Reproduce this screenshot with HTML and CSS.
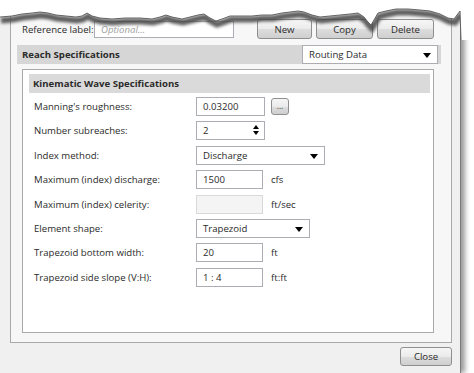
FILE: index.html
```html
<!DOCTYPE html>
<html>
<head>
<meta charset="utf-8">
<link rel="stylesheet" href="styles.css">
</head>
<body>
<div class="window">
  <div class="panel">
    <div class="ref-row">
      <span class="ref-label">Reference label:</span>
      <div class="textbox ref-input placeholder">Optional...</div>
      <div class="btn-group">
        <button class="btn btn-new">New</button>
        <button class="btn btn-copy">Copy</button>
        <button class="btn btn-delete">Delete</button>
      </div>
    </div>
    <div class="section-bar">
      <span class="section-title">Reach Specifications</span>
      <div class="combo routing">Routing Data<span class="arrow"></span></div>
    </div>
    <div class="group">
      <div class="group-title">Kinematic Wave Specifications</div>
      <div class="rows">
        <div class="row">
          <span class="label">Manning's roughness:</span>
          <div class="textbox w69">0.03200</div>
          <button class="btn btn-dots">...</button>
        </div>
        <div class="row">
          <span class="label">Number subreaches:</span>
          <div class="textbox w69 spin">2<span class="spinner"><span class="up"></span><span class="down"></span></span></div>
        </div>
        <div class="row">
          <span class="label">Index method:</span>
          <div class="combo w129">Discharge<span class="arrow"></span></div>
        </div>
        <div class="row">
          <span class="label">Maximum (index) discharge:</span>
          <div class="textbox w67">1500</div>
          <span class="unit">cfs</span>
        </div>
        <div class="row">
          <span class="label">Maximum (index) celerity:</span>
          <div class="textbox w67 disabled"></div>
          <span class="unit">ft/sec</span>
        </div>
        <div class="row">
          <span class="label">Element shape:</span>
          <div class="combo w114">Trapezoid<span class="arrow"></span></div>
        </div>
        <div class="row">
          <span class="label">Trapezoid bottom width:</span>
          <div class="textbox w67">20</div>
          <span class="unit">ft</span>
        </div>
        <div class="row">
          <span class="label">Trapezoid side slope (V:H):</span>
          <div class="textbox w67">1 : 4</div>
          <span class="unit">ft:ft</span>
        </div>
      </div>
    </div>
  </div>
  <div class="footer">
    <button class="btn btn-close">Close</button>
  </div>
</div>
<svg class="torn" width="474" height="40" viewBox="0 0 474 40">
  <defs>
    <filter id="blur" x="-5%" y="-50%" width="110%" height="200%">
      <feGaussianBlur stdDeviation="1.8"/>
    </filter>
  </defs>
  <path d="M0,17 L12,16 L22,14 L32,13 L40,12 L48,13 L56,15 L66,16 L76,17 L82,16 L87,13 L92,16 L100,18 L112,19 L125,18 L140,18 L152,19 L160,17 L166,15 L172,17 L182,19 L190,17 L198,15 L204,14 L210,18 L216,21 L222,19 L230,16 L240,16 L252,16 L262,15 L272,15 L282,13 L290,12 L298,11 L304,12 L312,15 L320,17 L330,16 L340,15 L350,14 L358,13 L364,17 L368,22 L371,25 L374,20 L378,13 L386,11 L396,9 L408,9 L420,10 L430,11 L440,14 L448,18 L454,19 L457,15 L460,11" fill="none" stroke="#444" stroke-width="6" transform="translate(1,3.5)" filter="url(#blur)" opacity="0.85"/>
  <path d="M0,0 L474,0 L474,40 L461,40 L460,11 L457,15 L454,19 L448,18 L440,14 L430,11 L420,10 L408,9 L396,9 L386,11 L378,13 L374,20 L371,25 L368,22 L364,17 L358,13 L350,14 L340,15 L330,16 L320,17 L312,15 L304,12 L298,11 L290,12 L282,13 L272,15 L262,15 L252,16 L240,16 L230,16 L222,19 L216,21 L210,18 L204,14 L198,15 L190,17 L182,19 L172,17 L166,15 L160,17 L152,19 L140,18 L125,18 L112,19 L100,18 L92,16 L87,13 L82,16 L76,17 L66,16 L56,15 L48,13 L40,12 L32,13 L22,14 L12,16 L0,17 Z" fill="#ffffff"/>
  <path d="M0,17 L12,16 L22,14 L32,13 L40,12 L48,13 L56,15 L66,16 L76,17 L82,16 L87,13 L92,16 L100,18 L112,19 L125,18 L140,18 L152,19 L160,17 L166,15 L172,17 L182,19 L190,17 L198,15 L204,14 L210,18 L216,21 L222,19 L230,16 L240,16 L252,16 L262,15 L272,15 L282,13 L290,12 L298,11 L304,12 L312,15 L320,17 L330,16 L340,15 L350,14 L358,13 L364,17 L368,22 L371,25 L374,20 L378,13 L386,11 L396,9 L408,9 L420,10 L430,11 L440,14 L448,18 L454,19 L457,15 L460,11 L461,40" fill="none" stroke="#555" stroke-width="0.9"/>
</svg>
</body>
</html>
```
FILE: styles.css
```css
* { box-sizing: border-box; }
html, body { margin: 0; padding: 0; background: #ffffff; }
body {
  font-family: "Open Sans", "Noto Sans", sans-serif;
  font-size: 9.6px;
  color: #2b2b2b;
  width: 474px;
  height: 373px;
  overflow: hidden;
  position: relative;
}
button { font-family: inherit; font-size: inherit; color: inherit; }

.window {
  width: 461px;
  height: 373px;
  background: #f0f0f0;
  border-right: 1px solid #7a7a7a;
  box-shadow: 4px 0 5px 0 rgba(0,0,0,0.4);
  padding-top: 8px;
}

.panel {
  margin-left: 10px;
  width: 442px;
  height: 335px;
  background: #f7f7f7;
  border: 1px solid #a9a9a9;
  border-top: none;
  padding: 11px 10px 0 6px;
}

.ref-row {
  display: flex;
  align-items: center;
  height: 20px;
  padding-left: 5px;
}
.ref-label { width: 72px; }
.textbox {
  height: 19px;
  background: #fff;
  border: 1px solid #abadb3;
  display: flex;
  align-items: center;
  padding-left: 6px;
  position: relative;
}
.ref-input { width: 140px; height: 17px; }
.placeholder { color: #a0a0a0; font-style: italic; }
.btn-group { display: flex; gap: 4px; margin-left: auto; margin-right: 7px; }
.btn {
  height: 20px;
  border: 1px solid #8e8f8f;
  border-radius: 3px;
  background: linear-gradient(#f6f6f6 0%, #ebebeb 50%, #dddddd 51%, #cfcfcf 100%);
  padding: 0;
  display: flex;
  align-items: center;
  justify-content: center;
}
.btn-new { width: 55px; }
.btn-copy { width: 57px; }
.btn-delete { width: 57px; }

.section-bar {
  margin-top: 6px;
  height: 19px;
  background: #d6d6d6;
  display: flex;
  align-items: center;
  padding-left: 5px;
}
.section-title { font-weight: 700; }
.combo {
  height: 19px;
  background: #fff;
  border: 1px solid #abadb3;
  display: flex;
  align-items: center;
  padding-left: 6px;
  position: relative;
}
.routing { width: 136px; margin-left: auto; margin-right: 3px; }
.arrow {
  position: absolute;
  right: 6px;
  top: 7px;
  width: 0; height: 0;
  border-left: 4px solid transparent;
  border-right: 4px solid transparent;
  border-top: 5px solid #000;
}

.group {
  margin: 5px 7px 0 5px;
  height: 264px;
  background: #fff;
  border: 1px solid #a9a9a9;
  padding: 4px 3px 0 6px;
}
.group-title {
  height: 19px;
  background: #dadada;
  font-weight: 700;
  display: flex;
  align-items: center;
  padding-left: 4px;
}
.rows {
  margin-top: 4px;
  padding-left: 5px;
  display: flex;
  flex-direction: column;
  gap: 5.4px;
}
.row {
  display: flex;
  align-items: center;
  height: 19px;
}
.label { width: 162px; }
.w69 { width: 69px; }
.w67 { width: 67px; }
.w129 { width: 129px; }
.w114 { width: 114px; }
.unit { margin-left: 8px; }
.disabled { background: #f4f4f4; border-color: #d9d9d9; }
.btn-dots { width: 18px; height: 17px; margin-left: 6px; font-size: 8px; line-height: 1; align-items: flex-end; padding-bottom: 4px; }

.spinner {
  position: absolute;
  right: 5px;
  top: 3px;
  display: flex;
  flex-direction: column;
  gap: 2px;
}
.spinner .up, .spinner .down {
  width: 0; height: 0;
  border-left: 3.5px solid transparent;
  border-right: 3.5px solid transparent;
}
.spinner .up { border-bottom: 4px solid #000; }
.spinner .down { border-top: 4px solid #000; }

.footer {
  display: flex;
  justify-content: flex-end;
  width: 452px;
  margin-top: 4px;
}
.btn-close { width: 52px; height: 19px; }

.torn {
  position: absolute;
  left: 0;
  top: 0;
}
```
